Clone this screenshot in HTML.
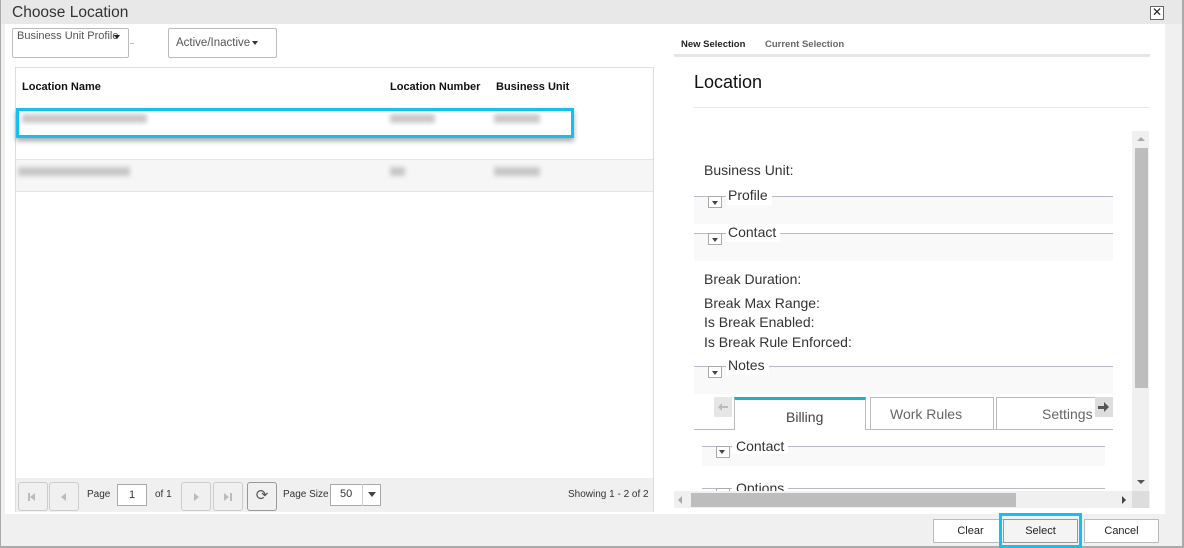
<!DOCTYPE html>
<html><head><meta charset="utf-8"><style>
*{box-sizing:border-box;margin:0;padding:0}
body{width:1184px;height:548px;position:relative;overflow:hidden;background:#f0f0f0;font-family:"Liberation Sans",sans-serif;color:#333}
.a{position:absolute}
.t{position:absolute;white-space:nowrap}
.blur{position:absolute;height:9px;background:#bbb;filter:blur(2.5px);opacity:.8}
.sec{position:absolute;left:694px;width:419px;height:28px;background:#f9f9f9}
.sec .ln{position:absolute;left:0;right:0;top:0;border-top:1px solid #b8b8c8}
.sec .bx{position:absolute;left:14px;top:0;width:14px;height:12px;border:1px solid #aaa;background:#fff}
.sec .bx:after{content:"";position:absolute;left:3px;top:4px;border:3px solid transparent;border-top:4px solid #444}
.sec .lb{position:absolute;left:32px;top:-9px;background:#fff;padding:0 4px 2px 2px;font-size:14px;color:#333}
.pb{position:absolute;top:482px;width:30px;height:29px;border:1px solid #ccc;border-radius:3px;background:#f0f0f0}
.btn{position:absolute;top:519px;height:24px;border:1px solid #bbb;background:#fff;font-size:11px;text-align:center;line-height:22px;color:#222}
</style></head><body>
<div class="a" style="left:0;top:0;width:1184px;height:24px;background:#e8e8e8"></div>
<div class="t" style="left:12px;top:4px;font-size:15.5px;color:#333">Choose Location</div>
<div class="a" style="left:1150px;top:6px;width:14px;height:14px;border:1px solid #666;background:#fff;font-size:12px;line-height:11px;text-align:center;color:#222">✕</div>
<div class="a" style="left:1182px;top:0;width:2px;height:548px;background:#aaa"></div>
<div class="a" style="left:0;top:0;width:1px;height:548px;background:#aaa"></div>
<div class="a" style="left:0;top:546px;width:1184px;height:2px;background:#aaa"></div>
<div class="a" style="left:5px;top:24px;width:1160px;height:490px;background:#fff"></div>

<div class="a" style="left:12px;top:28px;width:117px;height:30px;border:1px solid #bbb;border-radius:2px"></div>
<div class="t" style="left:17px;top:30px;font-size:11px;color:#555">Business Unit Profile</div>
<div class="a" style="left:114px;top:35px;border:3px solid transparent;border-top:4px solid #222"></div>
<div class="a" style="left:130px;top:43px;width:4px;border-top:1px solid #bbb"></div>
<div class="a" style="left:168px;top:28px;width:109px;height:30px;border:1px solid #bbb;border-radius:2px"></div>
<div class="t" style="left:176px;top:37px;font-size:11.5px;color:#555">Active/Inactive</div>
<div class="a" style="left:252px;top:41px;border:3px solid transparent;border-top:4px solid #333"></div>

<div class="a" style="left:15px;top:67px;width:639px;height:445px;border:1px solid #ddd"></div>
<div class="t" style="left:22px;top:81px;font-size:11px;font-weight:bold;color:#111">Location Name</div>
<div class="t" style="left:390px;top:81px;font-size:11px;font-weight:bold;color:#111">Location Number</div>
<div class="t" style="left:496px;top:81px;font-size:11px;font-weight:bold;color:#111">Business Unit</div>
<div class="a" style="left:16px;top:159px;width:637px;height:33px;background:#f6f6f6;border-top:1px solid #e4e4e4;border-bottom:1px solid #e4e4e4"></div>
<div class="blur" style="left:22px;top:114px;width:125px"></div>
<div class="blur" style="left:390px;top:114px;width:45px"></div>
<div class="blur" style="left:494px;top:114px;width:46px"></div>
<div class="blur" style="left:18px;top:167px;width:112px"></div>
<div class="blur" style="left:390px;top:167px;width:15px"></div>
<div class="blur" style="left:494px;top:167px;width:46px"></div>
<div class="a" style="left:16px;top:108px;width:558px;height:30px;border:3px solid #16c0ee;box-shadow:0 3px 5px rgba(0,0,0,.35)"></div>

<div class="a" style="left:16px;top:478px;width:637px;height:34px;background:#f0f0f0"></div>
<div class="pb" style="left:18px"><div class="a" style="left:9px;top:10px;width:2px;height:8px;background:#bbb"></div><div class="a" style="left:11px;top:10px;border:4px solid transparent;border-right:5px solid #bbb;border-left:0"></div></div>
<div class="pb" style="left:49px"><div class="a" style="left:11px;top:10px;border:4px solid transparent;border-right:5px solid #bbb;border-left:0"></div></div>
<div class="t" style="left:87px;top:489px;font-size:10px">Page</div>
<div class="a" style="left:117px;top:484px;width:30px;height:22px;border:1px solid #aaa;background:#fff;font-size:11px;text-align:center;line-height:20px">1</div>
<div class="t" style="left:155px;top:489px;font-size:10px">of 1</div>
<div class="pb" style="left:181px"><div class="a" style="left:12px;top:10px;border:4px solid transparent;border-left:5px solid #bbb;border-right:0"></div></div>
<div class="pb" style="left:213px"><div class="a" style="left:10px;top:10px;border:4px solid transparent;border-left:5px solid #bbb;border-right:0"></div><div class="a" style="left:16px;top:10px;width:2px;height:8px;background:#bbb"></div></div>
<div class="pb" style="left:247px;border-color:#999;font-size:15px;text-align:center;line-height:26px;color:#555">⟳</div>
<div class="t" style="left:283px;top:489px;font-size:10px">Page Size</div>
<div class="a" style="left:330px;top:484px;width:51px;height:22px;border:1px solid #aaa;background:#fff"></div>
<div class="t" style="left:340px;top:488px;font-size:11px">50</div>
<div class="a" style="left:362px;top:484px;width:1px;height:22px;background:#ccc"></div>
<div class="a" style="left:368px;top:492px;border:4px solid transparent;border-top:5px solid #444"></div>
<div class="t" style="left:568px;top:489px;font-size:10px">Showing 1 - 2 of 2</div>

<div class="t" style="left:681px;top:39px;font-size:9.5px;font-weight:bold;color:#222">New Selection</div>
<div class="t" style="left:765px;top:39px;font-size:9.5px;font-weight:bold;color:#666">Current Selection</div>
<div class="a" style="left:674px;top:54px;width:476px;height:3px;background:#e6e6e6"></div>
<div class="t" style="left:694px;top:72px;font-size:18px;color:#111">Location</div>
<div class="a" style="left:694px;top:107px;width:456px;border-top:1px solid #e6e6e6"></div>

<div class="a" style="left:1132px;top:131px;width:17px;height:360px;background:#f0f0f0"></div>
<div class="a" style="left:1135px;top:148px;width:13px;height:240px;background:#bdbdbd"></div>
<div class="a" style="left:1137px;top:137px;border:4px solid transparent;border-bottom:4px solid #aaa;border-top:0"></div>
<div class="a" style="left:1137px;top:480px;border:4px solid transparent;border-top:4px solid #555;border-bottom:0"></div>
<div class="a" style="left:674px;top:491px;width:476px;height:17px;background:#f0f0f0"></div>
<div class="a" style="left:691px;top:493px;width:325px;height:14px;background:#bdbdbd"></div>
<div class="a" style="left:678px;top:496px;border:4px solid transparent;border-right:4px solid #aaa;border-left:0"></div>
<div class="a" style="left:1122px;top:496px;border:4px solid transparent;border-left:4px solid #444;border-right:0"></div>
<div class="a" style="left:1132px;top:491px;width:17px;height:17px;background:#ddd"></div>

<div class="t" style="left:704px;top:162px;font-size:14px">Business Unit:</div>
<div class="sec" style="top:196px"><div class="ln"></div><div class="bx"></div><div class="lb">Profile</div></div>
<div class="sec" style="top:233px"><div class="ln"></div><div class="bx"></div><div class="lb">Contact</div></div>
<div class="t" style="left:704px;top:271px;font-size:14px">Break Duration:</div>
<div class="t" style="left:704px;top:295px;font-size:14px">Break Max Range:</div>
<div class="t" style="left:704px;top:314px;font-size:14px">Is Break Enabled:</div>
<div class="t" style="left:704px;top:334px;font-size:14px">Is Break Rule Enforced:</div>
<div class="sec" style="top:366px"><div class="ln"></div><div class="bx"></div><div class="lb">Notes</div></div>

<div class="a" style="left:694px;top:429px;width:419px;border-top:1px solid #bbb"></div>
<div class="a" style="left:714px;top:397px;width:18px;height:20px;background:#e6e6e6"><div class="a" style="left:4px;top:6px;border:4px solid transparent;border-right:4px solid #bbb;border-left:0"></div><div class="a" style="left:8px;top:9px;width:6px;height:2px;background:#bbb"></div></div>
<div class="a" style="left:734px;top:397px;width:132px;height:33px;background:#fff;border:1px solid #bbb;border-bottom:none;border-top:3px solid #20afcc"></div>
<div class="t" style="left:786px;top:409px;font-size:14px;color:#444">Billing</div>
<div class="a" style="left:870px;top:397px;width:124px;height:33px;border:1px solid #bbb"></div>
<div class="t" style="left:890px;top:406px;font-size:14px;color:#666">Work Rules</div>
<div class="a" style="left:996px;top:397px;width:117px;height:33px;border:1px solid #bbb;border-right:none"></div>
<div class="t" style="left:1042px;top:406px;font-size:14px;color:#666">Settings</div>
<div class="a" style="left:1095px;top:397px;width:18px;height:20px;background:#ddd"><div class="a" style="left:3px;top:9px;width:7px;height:3px;background:#555"></div><div class="a" style="left:9px;top:5px;border:5px solid transparent;border-left:5px solid #555;border-right:0"></div></div>
<div class="a" style="left:702px;top:446px;width:403px;height:20px;background:#f9f9f9;border-top:1px solid #b8b8c8"></div>
<div class="a" style="left:716px;top:446px;width:14px;height:12px;border:1px solid #aaa;background:#fff"></div>
<div class="a" style="left:719px;top:450px;border:3px solid transparent;border-top:4px solid #444"></div>
<div class="t" style="left:732px;top:438px;font-size:14px;background:#fff;padding:0 4px">Contact</div>
<div class="a" style="left:702px;top:488px;width:403px;border-top:1px solid #b8b8c8"></div>
<div class="a" style="left:716px;top:488px;width:14px;height:3px;border:1px solid #aaa;border-bottom:none;background:#fff"></div>
<div class="a" style="left:732px;top:480px;height:11px;overflow:hidden;background:#fff;padding:0 4px"><span style="font-size:14px;position:relative;top:0">Options</span></div>

<div class="btn" style="left:933px;width:75px">Clear</div>
<div class="a" style="left:999px;top:513px;width:83px;height:35px;border:3px solid #16c0ee"></div>
<div class="btn" style="left:1003px;width:75px;border-color:#999;background:#f4f4f4">Select</div>
<div class="btn" style="left:1084px;width:75px">Cancel</div>
</body></html>
